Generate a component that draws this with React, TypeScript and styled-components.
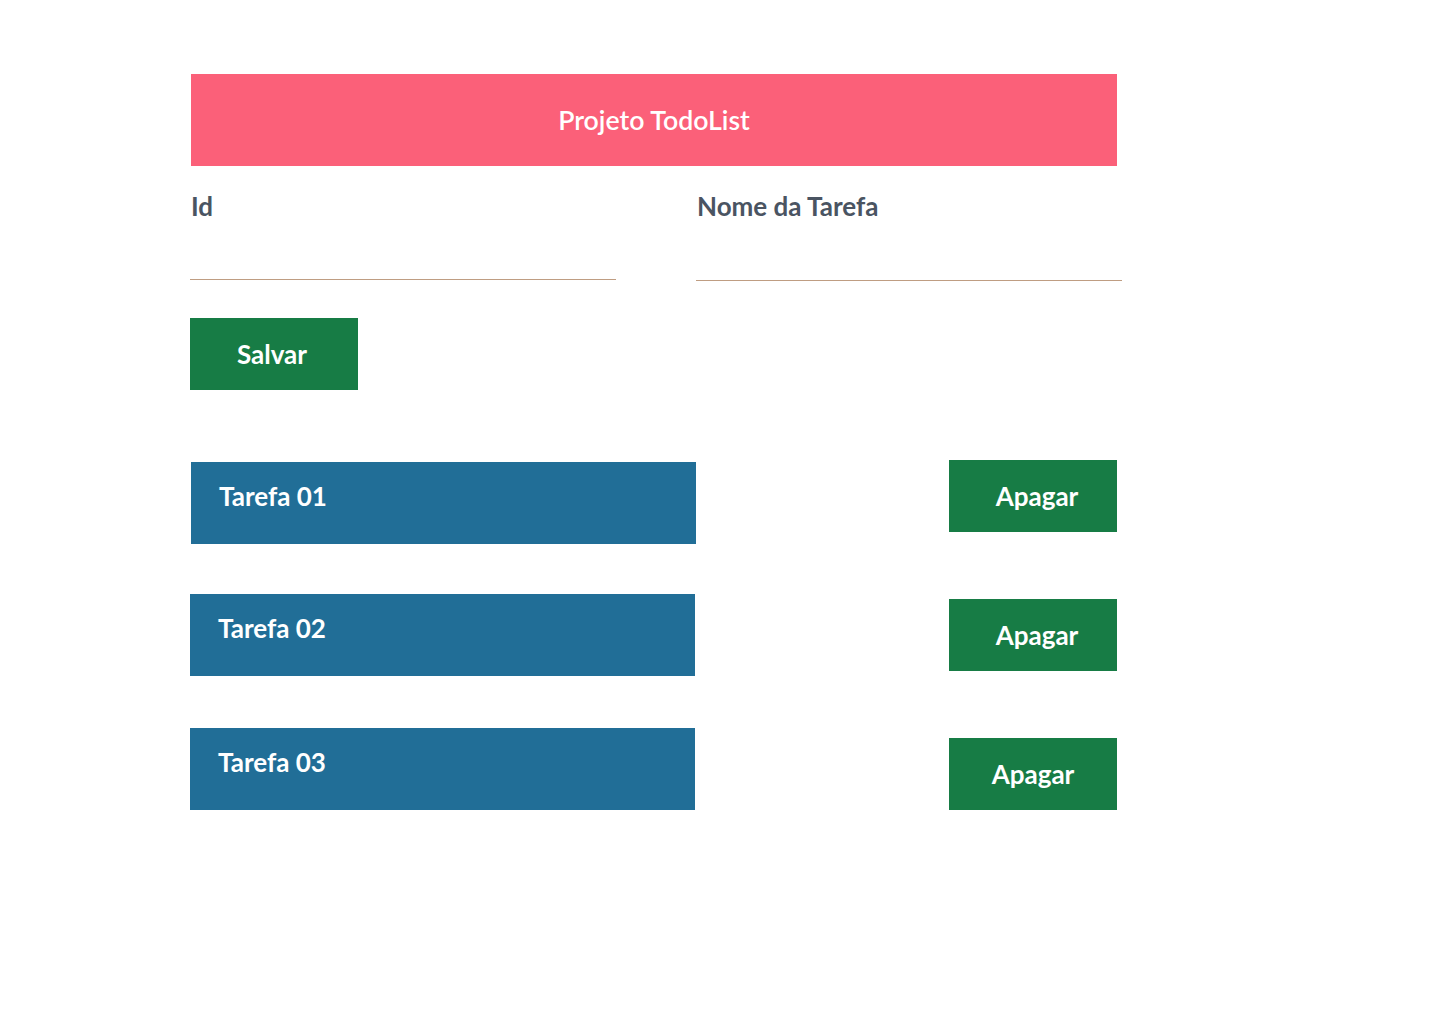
import styled, { createGlobalStyle } from 'styled-components'

const GlobalStyle = createGlobalStyle`
  * { box-sizing: border-box; }
  body {
    margin: 0;
    background: #ffffff;
    font-family: Lato, "Open Sans", sans-serif;
  }
`

const tasks = [
  { id: 1, name: 'Tarefa 01', boxShift: 2, buttonShift: 0, boxLeft: 1, textNudge: 4 },
  { id: 2, name: 'Tarefa 02', boxShift: 0, buttonShift: 5, boxLeft: 0, textNudge: 4 },
  { id: 3, name: 'Tarefa 03', boxShift: 2, buttonShift: 12, boxLeft: 0, textNudge: 0 },
]

export default function App() {
  return (
    <>
      <GlobalStyle />
      <Page>
        <Header>Projeto TodoList</Header>

        <Fields>
          <Field>
            <Label htmlFor="id">Id</Label>
            <Input id="id" $height={58} />
          </Field>
          <Field>
            <Label htmlFor="nome">Nome da Tarefa</Label>
            <Input id="nome" $height={59} />
          </Field>
        </Fields>

        <SaveButton>Salvar</SaveButton>

        <TaskList>
          {tasks.map((task) => (
            <TaskRow key={task.id}>
              <TaskBox $shift={task.boxShift} $left={task.boxLeft}>
                {task.name}
              </TaskBox>
              <DeleteButton $shift={task.buttonShift} $nudge={task.textNudge}>
                Apagar
              </DeleteButton>
            </TaskRow>
          ))}
        </TaskList>
      </Page>
    </>
  )
}

const Page = styled.main`
  width: 932px;
  margin-left: 190px;
  padding-top: 74px;
  display: flex;
  flex-direction: column;
`

const Header = styled.h1`
  margin: 0 0 0 1px;
  width: 926px;
  height: 92px;
  background: #fb6079;
  color: #ffffff;
  font-size: 26.7px;
  font-weight: 600;
  display: flex;
  align-items: center;
  justify-content: center;
`

const Fields = styled.div`
  display: flex;
  gap: 80px;
  margin-top: 25px;
`

const Field = styled.div`
  width: 426px;
  display: flex;
  flex-direction: column;
`

const Label = styled.label`
  color: #4a5462;
  font-size: 26px;
  font-weight: 700;
  line-height: 31px;
  margin-left: 1px;
`

const Input = styled.input<{ $height: number }>`
  height: ${({ $height }) => $height}px;
  border: none;
  border-bottom: 1px solid #bf9d82;
  outline: none;
  background: transparent;
  font-family: inherit;
  font-size: 20px;
  padding: 0;
`

const GreenButton = styled.button`
  width: 168px;
  height: 72px;
  border: none;
  background: #177c45;
  color: #ffffff;
  font-family: inherit;
  font-size: 26px;
  font-weight: 700;
  cursor: pointer;
`

const SaveButton = styled(GreenButton)`
  margin-top: 37px;
  padding: 0 4px 0 0;
`

const TaskList = styled.div`
  display: flex;
  flex-direction: column;
  gap: 50px;
  margin-top: 70px;
`

const TaskRow = styled.div`
  width: 927px;
  display: flex;
  justify-content: space-between;
  align-items: flex-start;
`

const TaskBox = styled.div<{ $shift: number; $left: number }>`
  width: 505px;
  height: 82px;
  margin-top: ${({ $shift }) => $shift}px;
  margin-left: ${({ $left }) => $left}px;
  padding: 19px 28px 0;
  background: #216e97;
  color: #ffffff;
  font-size: 26px;
  font-weight: 700;
  line-height: 31px;
`

const DeleteButton = styled(GreenButton)<{ $shift: number; $nudge: number }>`
  margin-top: ${({ $shift }) => $shift}px;
  padding: 0 0 0 ${({ $nudge }) => $nudge * 2}px;
`
